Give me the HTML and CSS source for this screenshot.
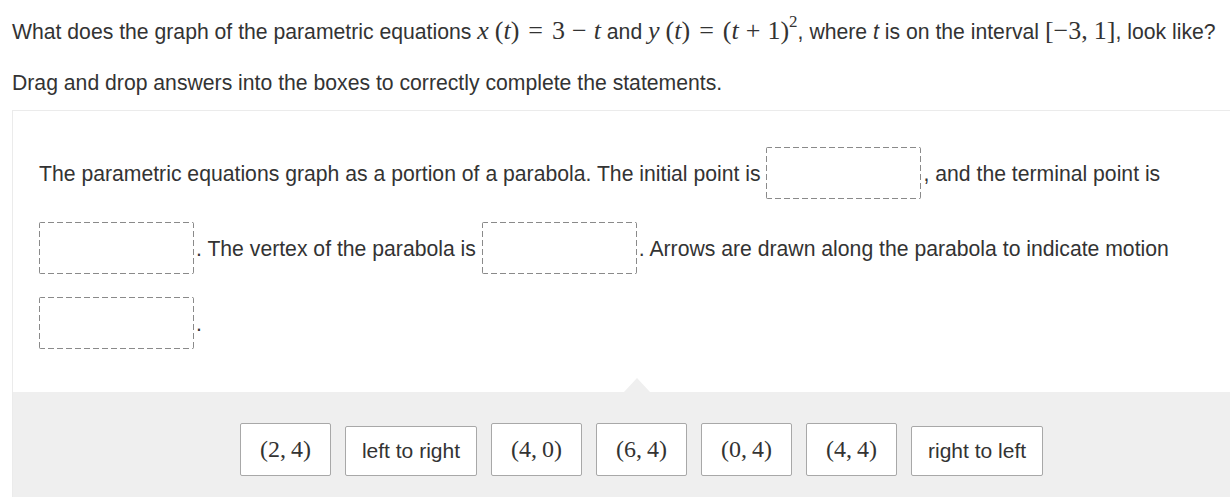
FILE: index.html
```html
<!DOCTYPE html>
<html>
<head>
<meta charset="utf-8">
<link rel="stylesheet" href="styles.css">
</head>
<body>
<p class="question">What does the graph of the parametric equations <span class="math"><i>x</i><span class="fn">(<i>t</i>)</span><span class="rel">=</span>3<span class="bin">−</span><i>t</i></span> and <span class="math"><i>y</i><span class="fn">(<i>t</i>)</span><span class="rel">=</span>(<i>t</i><span class="bin">+</span>1)<sup>2</sup></span>, where <i class="ti">t</i> is on the interval <span class="math">[−3,<span class="sp"></span>1]</span>, look like?</p>
<p class="instructions">Drag and drop answers into the boxes to correctly complete the statements.</p>
<div class="card">
  <div class="statement">The parametric equations graph as a portion of a parabola. The initial point is <span class="drop"></span>, and the terminal point is <span class="drop"></span>. The vertex of the parabola is <span class="drop"></span>. Arrows are drawn along the parabola to indicate motion <span class="drop"></span>.</div>
  <div class="tray">
    <span class="pointer"></span>
    <div class="chips">
      <div class="chip math-chip"><span class="math">(2,<span class="sp"></span>4)</span></div>
      <div class="chip text-chip">left to right</div>
      <div class="chip math-chip"><span class="math">(4,<span class="sp"></span>0)</span></div>
      <div class="chip math-chip"><span class="math">(6,<span class="sp"></span>4)</span></div>
      <div class="chip math-chip"><span class="math">(0,<span class="sp"></span>4)</span></div>
      <div class="chip math-chip"><span class="math">(4,<span class="sp"></span>4)</span></div>
      <div class="chip text-chip">right to left</div>
    </div>
  </div>
</div>
</body>
</html>
```
FILE: styles.css
```css
html, body {
  overflow: hidden;
}
body {
  margin: 0;
  padding: 0 0 0 12px;
  background: #fff;
  color: #333;
  font-family: "Liberation Sans", Arial, sans-serif;
  font-size: 21.2px;
}
p {
  margin: 0;
  line-height: 24px;
}
.question {
  margin-top: 20px;
  white-space: nowrap;
}
.instructions {
  margin-top: 27px;
}
.math {
  font-family: "Liberation Serif", "Times New Roman", serif;
  font-size: 26px;
  color: #333;
}
.question .math {
  line-height: 0;
}
.math .fn {
  margin-left: 6px;
}
.math .rel {
  margin: 0 9px;
}
.math .bin {
  margin: 0 7px;
}
.math .sp {
  display: inline-block;
  width: 6px;
}
.math sup {
  font-size: 17px;
  line-height: 0;
  vertical-align: 12px;
}
.ti {
  font-style: italic;
}
.card {
  margin-top: 15px;
  width: 1257px;
  border: 1px solid #ebebeb;
  border-right: none;
  border-bottom: none;
}
.statement {
  padding: 25px 26px 31px 26px;
  line-height: 75px;
}
.drop {
  display: inline-block;
  width: 155px;
  height: 52px;
  box-sizing: border-box;
  vertical-align: middle;
  margin-top: -4px;
  margin-right: 2px;
  border-radius: 2px;
  background:
    linear-gradient(to right, #8a8a8a 6px, transparent 6px) top left / 9px 1px repeat-x,
    linear-gradient(to right, #8a8a8a 6px, transparent 6px) bottom left / 9px 1px repeat-x,
    linear-gradient(to bottom, #8a8a8a 6px, transparent 6px) top left / 1px 9px repeat-y,
    linear-gradient(to bottom, #8a8a8a 6px, transparent 6px) top right / 1px 9px repeat-y;
}
.tray {
  position: relative;
  background: #efefef;
  padding: 31px 0 22px;
}
.pointer {
  position: absolute;
  top: -14px;
  left: 611px;
  width: 0;
  height: 0;
  border-left: 13px solid transparent;
  border-right: 13px solid transparent;
  border-bottom: 14px solid #efefef;
}
.chips {
  display: flex;
  justify-content: center;
  align-items: flex-end;
  gap: 14px;
}
.chip {
  box-sizing: border-box;
  background: #fff;
  border: 1px solid #a8a8a8;
  border-radius: 2px;
  display: flex;
  align-items: center;
  justify-content: center;
}
.math-chip {
  height: 53px;
  padding: 0 19px;
}
.math-chip .math {
  font-size: 24px;
}
.math-chip .math .sp {
  width: 5px;
}
.text-chip {
  height: 50px;
  padding: 0 16px;
  font-size: 21px;
}
```
